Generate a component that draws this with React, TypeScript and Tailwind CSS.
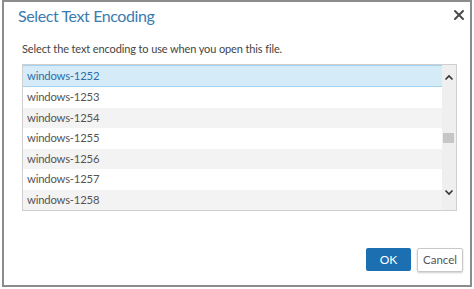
import React from "react";

const rows = [
  "windows-1252",
  "windows-1253",
  "windows-1254",
  "windows-1255",
  "windows-1256",
  "windows-1257",
  "windows-1258",
];

export default function App() {
  return (
    <div className="w-[474px] h-[289px] bg-white pl-[2px] pr-[2px] pb-[2px]" style={{ fontFamily: "Lato, 'Open Sans', sans-serif" }}>
      <div className="relative h-full border-2 border-[#8c8c8c] bg-white flex flex-col">
        <div className="flex items-start justify-between pl-[14px] pr-[4px] pt-[4px] h-[36px]">
          <span className="text-[16px] leading-[20px] text-[#3a7bb0] tracking-[-0.4px]">Select Text Encoding</span>
          <svg width="12" height="12" viewBox="0 0 12 12" className="mt-[3px] mr-[1px]">
            <path d="M2 2 L10 10 M10 2 L2 10" stroke="#4a4a4a" strokeWidth="2" strokeLinecap="round" />
          </svg>
        </div>
        <div className="pl-[18px] pt-[3px] text-[11px] leading-[16px] text-[#444] tracking-[-0.12px]">
          Select the text encoding to use when you open this file.
        </div>
        <div className="ml-[18px] mt-[7px] w-[435px] h-[147px] border border-[#cfcfcf] flex">
          <div className="flex-1 flex flex-col">
            {rows.map((r, i) => (
              <div
                key={r}
                className={
                  i === 0
                    ? "h-[22px] bg-[#d5ebf8] border-y border-[#a6d1ee] pl-[4px] text-[11.3px] tracking-[-0.2px] leading-[20px] text-[#2b6fa8]"
                    : i % 2 === 0
                    ? "h-[20.6px] bg-[#f3f3f3] pl-[4px] text-[11.3px] tracking-[-0.2px] leading-[20px] text-[#555]"
                    : "h-[20.6px] bg-white pl-[4px] text-[11.3px] tracking-[-0.2px] leading-[20px] text-[#555]"
                }
              >
                {r}
              </div>
            ))}
          </div>
          <div className="w-[14px] bg-[#efefef] relative">
            <svg width="10" height="7" viewBox="0 0 10 7" className="absolute left-[2px] top-[9px]">
              <path d="M1.5 5.5 L5 2 L8.5 5.5" stroke="#333" strokeWidth="1.6" fill="none" />
            </svg>
            <div className="absolute left-[1px] top-[68px] w-[11px] h-[10px] bg-[#c6c6c6]" />
            <svg width="10" height="7" viewBox="0 0 10 7" className="absolute left-[2px] bottom-[14px]">
              <path d="M1.5 1.5 L5 5 L8.5 1.5" stroke="#333" strokeWidth="1.6" fill="none" />
            </svg>
          </div>
        </div>
        <div className="flex-1" />
        <div className="flex justify-end gap-[6px] pr-[7px] pb-[13px]">
          <button className="w-[45px] h-[23px] bg-[#1c6fb0] text-white text-[12px] leading-[23px] rounded-[2px]">OK</button>
          <button className="w-[46px] h-[24px] bg-white border border-[#c8c8c8] text-[#555] text-[11.5px] leading-[22px] rounded-[2px] shadow-[0_1px_2px_rgba(0,0,0,0.2)]">Cancel</button>
        </div>
      </div>
    </div>
  );
}
